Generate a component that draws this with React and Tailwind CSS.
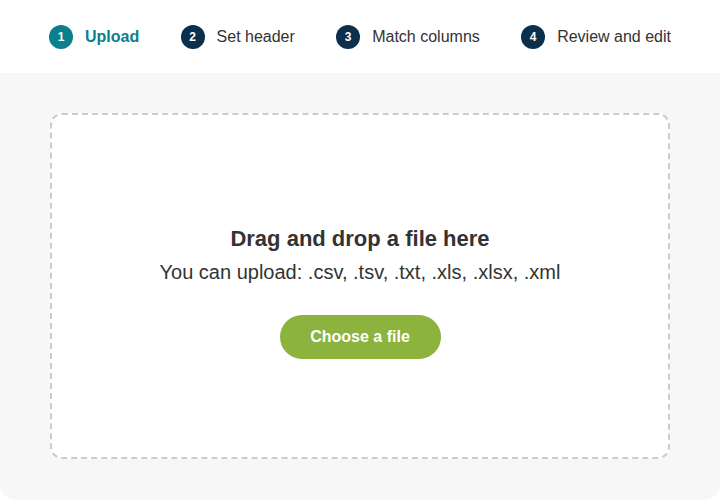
import React from 'react';

const steps = [
  { n: 1, label: 'Upload', active: true },
  { n: 2, label: 'Set header' },
  { n: 3, label: 'Match columns' },
  { n: 4, label: 'Review and edit' },
];

function Step({ n, label, active }) {
  return (
    <div className="flex items-center gap-3">
      <div
        className={`w-6 h-6 rounded-full flex items-center justify-center text-white text-xs font-bold ${
          active ? 'bg-[#0b7f8c]' : 'bg-[#0c2f4c]'
        }`}
      >
        {n}
      </div>
      <span className={`text-base ${active ? 'font-bold text-[#0b7f8c]' : 'text-[#333333]'}`}>{label}</span>
    </div>
  );
}

export default function App() {
  return (
    <div className="w-[720px] h-[500px] bg-white flex flex-col" style={{ fontFamily: '"Liberation Sans", Arial, sans-serif' }}>
      <div className="h-[73px] flex items-center justify-between pl-[49px] pr-[49px]">
        {steps.map((s) => (
          <Step key={s.n} {...s} />
        ))}
      </div>
      <div className="flex-1 bg-[#f7f7f7] rounded-b-2xl px-[50px] pt-10 pb-[41px] flex">
        <div className="flex-1 bg-white border-2 border-dashed border-[#c6cdd3] rounded-xl flex flex-col items-center justify-center pt-3">
          <h2 className="text-[22px] font-bold text-[#333333] leading-[26px]">Drag and drop a file here</h2>
          <p className="mt-2 text-xl text-[#333333] leading-6">You can upload: .csv, .tsv, .txt, .xls, .xlsx, .xml</p>
          <button className="mt-[31px] w-[161px] h-11 rounded-full bg-[#8bb33d] text-white font-bold text-base">
            Choose a file
          </button>
        </div>
      </div>
    </div>
  );
}
